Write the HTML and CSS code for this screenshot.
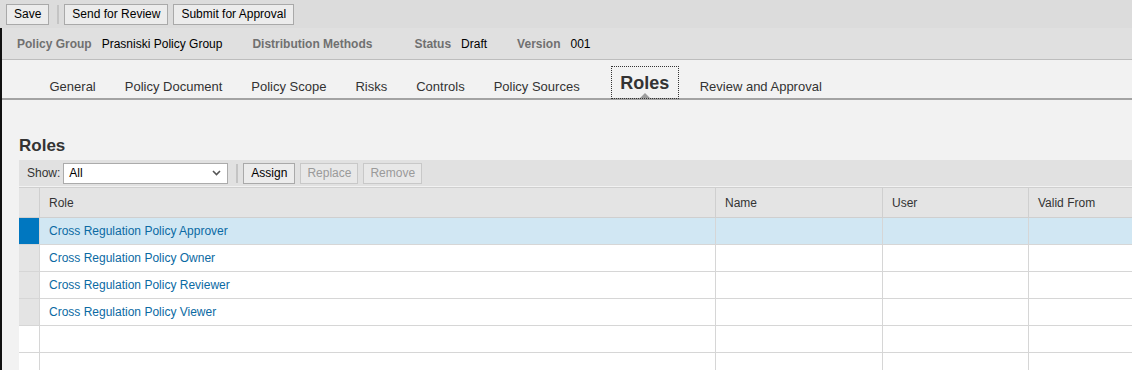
FILE: index.html
```html
<!DOCTYPE html>
<html lang="en">
<head>
    <meta charset="UTF-8">
    <title>Policy - Roles</title>
    <link rel="stylesheet" href="styles.css">
</head>
<body>
    <div class="toolbar-top">
        <button class="btn">Save</button>
        <span class="sep"></span>
        <button class="btn">Send for Review</button>
        <button class="btn">Submit for Approval</button>
    </div>
    <div class="main">
        <div class="header-info">
            <span class="lbl">Policy Group</span><span class="val">Prasniski Policy Group</span>
            <span class="lbl lbl-wide">Distribution Methods</span>
            <span class="lbl">Status</span><span class="val">Draft</span>
            <span class="lbl">Version</span><span class="val">001</span>
        </div>
        <div class="tabs">
            <div class="tab">General</div>
            <div class="tab">Policy Document</div>
            <div class="tab">Policy Scope</div>
            <div class="tab">Risks</div>
            <div class="tab">Controls</div>
            <div class="tab">Policy Sources</div>
            <div class="tab tab-active">Roles<span class="tab-arrow"></span></div>
            <div class="tab">Review and Approval</div>
        </div>
        <div class="content">
            <h2>Roles</h2>
            <div class="table-toolbar">
                <span class="show-lbl">Show:</span>
                <div class="select">All
                    <svg width="9" height="6" viewBox="0 0 9 6"><path d="M1 1 L4.5 4.5 L8 1" fill="none" stroke="#555" stroke-width="1.6"/></svg>
                </div>
                <span class="sep"></span>
                <button class="btn">Assign</button>
                <button class="btn btn-disabled">Replace</button>
                <button class="btn btn-disabled">Remove</button>
            </div>
            <div class="grid">
                <div class="row row-head">
                    <div class="cell sel"></div>
                    <div class="cell">Role</div>
                    <div class="cell">Name</div>
                    <div class="cell">User</div>
                    <div class="cell">Valid From</div>
                </div>
                <div class="row row-selected">
                    <div class="cell sel"></div>
                    <div class="cell"><a href="#">Cross Regulation Policy Approver</a></div>
                    <div class="cell"></div>
                    <div class="cell"></div>
                    <div class="cell"></div>
                </div>
                <div class="row">
                    <div class="cell sel"></div>
                    <div class="cell"><a href="#">Cross Regulation Policy Owner</a></div>
                    <div class="cell"></div>
                    <div class="cell"></div>
                    <div class="cell"></div>
                </div>
                <div class="row">
                    <div class="cell sel"></div>
                    <div class="cell"><a href="#">Cross Regulation Policy Reviewer</a></div>
                    <div class="cell"></div>
                    <div class="cell"></div>
                    <div class="cell"></div>
                </div>
                <div class="row">
                    <div class="cell sel"></div>
                    <div class="cell"><a href="#">Cross Regulation Policy Viewer</a></div>
                    <div class="cell"></div>
                    <div class="cell"></div>
                    <div class="cell"></div>
                </div>
                <div class="row row-empty">
                    <div class="cell sel"></div>
                    <div class="cell"></div>
                    <div class="cell"></div>
                    <div class="cell"></div>
                    <div class="cell"></div>
                </div>
                <div class="row row-empty">
                    <div class="cell sel"></div>
                    <div class="cell"></div>
                    <div class="cell"></div>
                    <div class="cell"></div>
                    <div class="cell"></div>
                </div>
            </div>
        </div>
    </div>
</body>
</html>
```

FILE: styles.css
```css
html, body {
    height: 100%;
}
body {
    font-family: "Liberation Sans", Arial, sans-serif;
    font-size: 12px;
    margin: 0;
    padding: 0;
    background-color: #f2f2f2;
    color: #333;
    overflow: hidden;
}
.btn {
    font-family: inherit;
    font-size: 12px;
    height: 21px;
    padding: 0 7px;
    background-color: #ececec;
    border: 1px solid #a9a9a9;
    color: #000;
    margin-right: 5px;
    cursor: pointer;
}
.btn-disabled {
    color: #9a9a9a;
    border-color: #c8c8c8;
    background-color: #e8e8e8;
    padding: 0 6px;
}
.sep {
    display: inline-block;
    width: 2px;
    height: 19px;
    background-color: #c4c4c4;
    margin: 0 5px 0 3px;
}
.toolbar-top {
    height: 28px;
    background-color: #dcdcdc;
    display: flex;
    align-items: center;
    padding-left: 6px;
}
.main {
    border-left: 2px solid #111;
    min-height: calc(100% - 28px);
}
.header-info {
    height: 31px;
    background-color: #e0e0e0;
    border-bottom: 1px solid #bdbdbd;
    display: flex;
    align-items: center;
    padding-left: 15px;
}
.lbl {
    font-weight: bold;
    color: #707070;
    margin-right: 10px;
}
.lbl-wide {
    margin-right: 42px;
}
.val {
    color: #000;
    margin-right: 30px;
}
.tabs {
    height: 38px;
    border-bottom: 2px solid #a3a3a3;
    display: flex;
    align-items: flex-end;
    padding-left: 33px;
}
.tab {
    font-size: 13px;
    color: #333;
    line-height: 18px;
    padding: 0 14.5px 2px;
}
.tab-active {
    position: relative;
    font-size: 18px;
    font-weight: bold;
    line-height: 22px;
    height: 33px;
    box-sizing: border-box;
    padding: 5px 9px 0 8px;
    margin: 0 6px -1px 17px;
    border: 1px dotted #333;
}
.tab-arrow {
    position: absolute;
    left: 50%;
    bottom: 0;
    margin-left: -5px;
    border-left: 5px solid transparent;
    border-right: 5px solid transparent;
    border-bottom: 5px solid #9d9d9d;
}
.content {
    padding: 36px 0 0 17px;
}
h2 {
    font-size: 17px;
    line-height: 20px;
    margin: 0 0 4px;
    color: #333;
}
.table-toolbar {
    height: 26px;
    background-color: #e1e1e1;
    display: flex;
    align-items: center;
    padding-left: 8px;
    margin-bottom: 1px;
}
.show-lbl {
    margin-right: 3px;
}
.select {
    width: 165px;
    height: 21px;
    box-sizing: border-box;
    background: white;
    border: 1px solid #ababab;
    display: flex;
    align-items: center;
    justify-content: space-between;
    padding: 0 6px 0 5px;
    color: #000;
    margin-right: 5px;
}
.table-toolbar .sep {
    margin: 0 5px 0 3px;
}
.grid {
    border-top: 1px solid #cfcfcf;
    width: 1300px;
}
.row {
    display: grid;
    grid-template-columns: 21px 676px 167px 146px 290px;
    height: 27px;
    background-color: white;
}
.cell {
    border-right: 1px solid #d6d6d6;
    border-bottom: 1px solid #d6d6d6;
    padding-left: 9px;
    display: flex;
    align-items: center;
    box-sizing: border-box;
}
.sel {
    padding: 0;
    background-color: #e4e4e4;
}
.row-head {
    height: 30px;
    background-color: #e4e4e4;
}
.row-head .cell {
    border-color: #cfcfcf;
}
.row-selected {
    background-color: #d1e7f3;
}
.row-selected .sel {
    background-color: #0077c0;
}
.row-empty .sel {
    background-color: white;
}
a {
    color: #0b6aa3;
    text-decoration: none;
}
```
